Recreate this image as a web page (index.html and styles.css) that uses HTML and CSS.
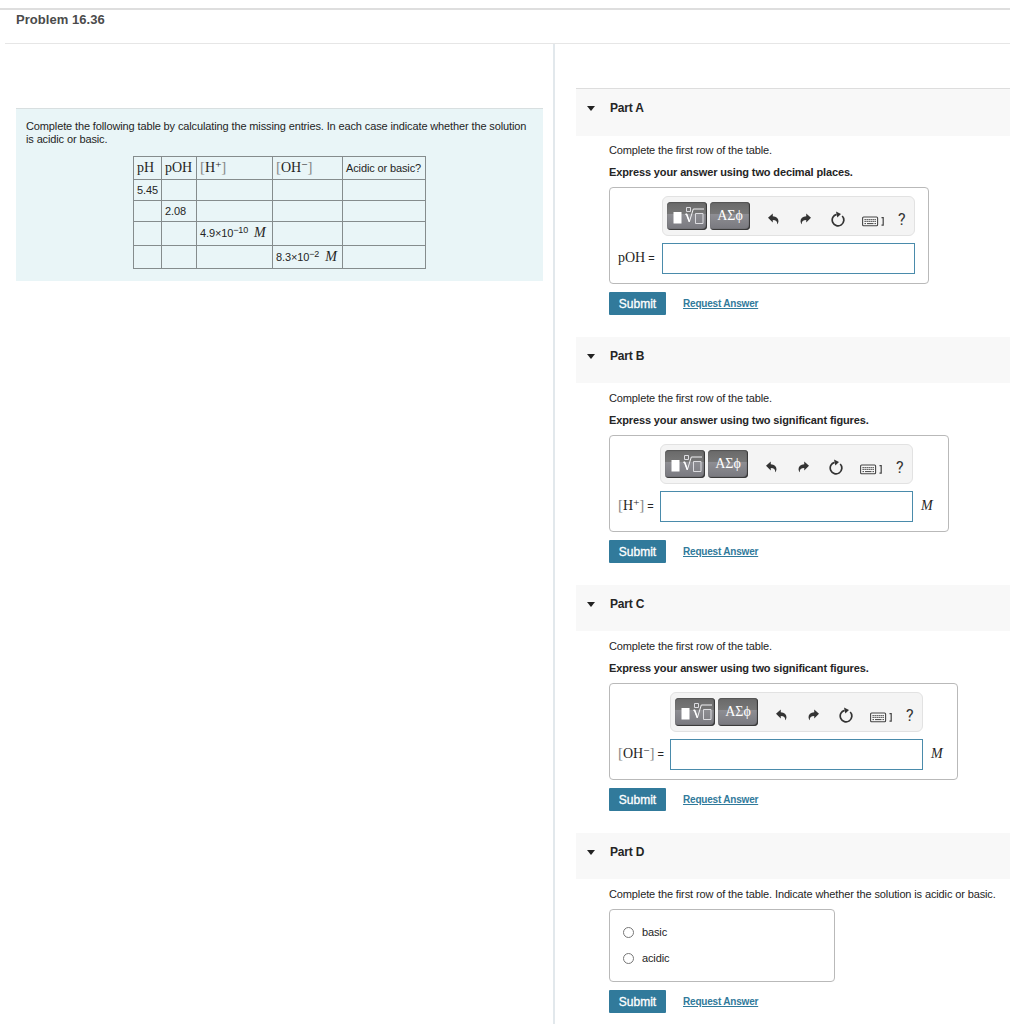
FILE: index.html
```html
<!DOCTYPE html>
<html lang="en">
<head>
  <meta charset="UTF-8" />
  <meta name="viewport" content="width=device-width, initial-scale=1.0" />
  <title>Problem 16.36</title>
  <link rel="stylesheet" href="styles.css">
</head>
<body>
  <!-- shared icons -->
  <svg class="icon-defs" width="0" height="0">
    <symbol id="i-template" viewBox="0 0 40 28">
      <rect x="6.500" y="10" width="8" height="11.500" fill="#fff"/>
      <path d="M19.500 5.500h4v4h-4zM28.500 11.500h7.500v10h-7.500z" fill="none" stroke="#dcdce0" stroke-width="1"/>
      <path d="M18 12.500l1.500-.8 2.800 8.300L26.300 7H37" fill="none" stroke="#f2f2f4" stroke-width="1"/>
      <path d="M19.500 12l2.800 7.500" stroke="#fff" stroke-width="1.500"/>
    </symbol>
    <symbol id="i-undo" viewBox="0 0 12 13">
      <path d="M0 5.200L5.200.6v2.800c4 .2 6.200 2.200 6.200 5.200 0 1.500-.5 2.700-1.300 3.700.1-3.300-1.400-4.700-4.900-4.700v2.600z"/>
    </symbol>
    <symbol id="i-redo" viewBox="0 0 12 13">
      <path d="M12 5.200L6.800.6v2.800C2.800 3.600.6 5.600.6 8.600c0 1.500.5 2.700 1.300 3.700-.1-3.300 1.400-4.700 4.900-4.700v2.600z"/>
    </symbol>
    <symbol id="i-reset" viewBox="0 0 14 16">
      <path d="M11.200 5A5.800 5.800 0 1 1 5.600 3.400" fill="none" stroke="#333" stroke-width="1.700"/>
      <path d="M5 .5l5 2.600L6.300 6.500z"/>
    </symbol>
    <symbol id="i-keys" viewBox="0 0 23 11">
      <rect x=".6" y="1" width="15" height="8.800" rx="1" fill="#f8f8f8" stroke="#444" stroke-width="1.100"/>
      <path d="M2.500 3.500h11.500M2.500 5.400h11.500" stroke="#444" stroke-width="1.100" stroke-dasharray="1.300 .7"/>
      <path d="M2.500 7.600h1.500M5 7.600h6.500M12.500 7.600H14" stroke="#444" stroke-width="1"/>
      <path d="M19.500 1.600h1.700v7.600h-1.700" fill="none" stroke="#444" stroke-width="1.200"/>
    </symbol>
  </svg>

  <header class="page-header">
    <h1>Problem 16.36</h1>
  </header>

  <div class="page">
    <section class="left">
      <div class="problem">
        <p>Complete the following table by calculating the missing entries. In each case indicate whether the solution<br>is acidic or basic.</p>
        <table>
          <colgroup><col class="c1"><col class="c2"><col class="c3"><col class="c4"><col class="c5"></colgroup>
          <tr class="head">
            <td><span class="math">pH</span></td>
            <td><span class="math">pOH</span></td>
            <td><span class="math"><i class="br">[</i>H<sup>+</sup><i class="br">]</i></span></td>
            <td><span class="math"><i class="br">[</i>OH<sup>−</sup><i class="br">]</i></span></td>
            <td>Acidic or basic?</td>
          </tr>
          <tr class="short"><td>5.45</td><td></td><td></td><td></td><td></td></tr>
          <tr class="short"><td></td><td>2.08</td><td></td><td></td><td></td></tr>
          <tr class="tall"><td></td><td></td><td>4.9×10<sup>−10</sup> <span class="unit">M</span></td><td></td><td></td></tr>
          <tr class="tall"><td></td><td></td><td></td><td>8.3×10<sup>−2</sup> <span class="unit">M</span></td><td></td></tr>
        </table>
      </div>
    </section>

    <main class="right">
      <section class="part first">
        <h2><span class="arrow"></span>Part A</h2>
        <div class="part-body">
          <p>Complete the first row of the table.</p>
          <p class="instructions">Express your answer using two decimal places.</p>
          <div class="answer answer-a">
            <label for="a"><span class="math">pOH</span> =</label>
            <div class="editor">
              <div class="toolbar">
                <button class="tool"><svg width="40" height="28"><use href="#i-template"/></svg></button>
                <button class="tool greek">ΑΣϕ</button>
                <svg class="undo" width="11" height="12"><use href="#i-undo"/></svg>
                <svg class="redo" width="11" height="12"><use href="#i-redo"/></svg>
                <svg class="reset" width="14" height="16"><use href="#i-reset"/></svg>
                <svg class="keys" width="23" height="11"><use href="#i-keys"/></svg>
                <span class="help">?</span>
              </div>
              <input type="text" id="a">
            </div>
          </div>
          <div class="actions"><button class="submit">Submit</button><a href="#">Request Answer</a></div>
        </div>
      </section>

      <section class="part">
        <h2><span class="arrow"></span>Part B</h2>
        <div class="part-body">
          <p>Complete the first row of the table.</p>
          <p class="instructions">Express your answer using two significant figures.</p>
          <div class="answer answer-b">
            <label for="b"><span class="math"><i class="br">[</i>H<sup>+</sup><i class="br">]</i></span> =</label>
            <div class="editor">
              <div class="toolbar">
                <button class="tool"><svg width="40" height="28"><use href="#i-template"/></svg></button>
                <button class="tool greek">ΑΣϕ</button>
                <svg class="undo" width="11" height="12"><use href="#i-undo"/></svg>
                <svg class="redo" width="11" height="12"><use href="#i-redo"/></svg>
                <svg class="reset" width="14" height="16"><use href="#i-reset"/></svg>
                <svg class="keys" width="23" height="11"><use href="#i-keys"/></svg>
                <span class="help">?</span>
              </div>
              <input type="text" id="b">
            </div>
            <span class="unit">M</span>
          </div>
          <div class="actions"><button class="submit">Submit</button><a href="#">Request Answer</a></div>
        </div>
      </section>

      <section class="part">
        <h2><span class="arrow"></span>Part C</h2>
        <div class="part-body">
          <p>Complete the first row of the table.</p>
          <p class="instructions">Express your answer using two significant figures.</p>
          <div class="answer answer-c">
            <label for="c"><span class="math"><i class="br">[</i>OH<sup>−</sup><i class="br">]</i></span> =</label>
            <div class="editor">
              <div class="toolbar">
                <button class="tool"><svg width="40" height="28"><use href="#i-template"/></svg></button>
                <button class="tool greek">ΑΣϕ</button>
                <svg class="undo" width="11" height="12"><use href="#i-undo"/></svg>
                <svg class="redo" width="11" height="12"><use href="#i-redo"/></svg>
                <svg class="reset" width="14" height="16"><use href="#i-reset"/></svg>
                <svg class="keys" width="23" height="11"><use href="#i-keys"/></svg>
                <span class="help">?</span>
              </div>
              <input type="text" id="c">
            </div>
            <span class="unit">M</span>
          </div>
          <div class="actions"><button class="submit">Submit</button><a href="#">Request Answer</a></div>
        </div>
      </section>

      <section class="part last">
        <h2><span class="arrow"></span>Part D</h2>
        <div class="part-body">
          <p>Complete the first row of the table. Indicate whether the solution is acidic or basic.</p>
          <div class="choices">
            <label><input type="radio" name="d">basic</label>
            <label><input type="radio" name="d">acidic</label>
          </div>
          <div class="actions"><button class="submit">Submit</button><a href="#">Request Answer</a></div>
        </div>
      </section>
    </main>
  </div>
</body>
</html>
```
FILE: styles.css
```css
* {
  box-sizing: border-box;
  margin: 0;
  padding: 0;
}

body {
  font-family: "Liberation Sans", Arial, sans-serif;
  font-size: 11px;
  line-height: 13px;
  letter-spacing: -0.125px;
  color: #252525;
  background: #fff;
  padding-top: 8px;
}

.icon-defs {
  display: none;
}

.page-header {
  height: 36px;
  border-top: 2px solid #dedede;
}

.page-header h1 {
  margin-left: 5px;
  height: 34px;
  padding: 2px 0 0 11px;
  border-bottom: 1px solid #e6e6e6;
  font-size: 13px;
  line-height: 15px;
  letter-spacing: 0.05px;
  color: #4b4b4b;
}

.page {
  display: flex;
  height: 980px;
}

.left {
  width: 555px;
  padding: 64px 10px 0 16px;
  border-right: 2px solid #e2e8ec;
}

.problem {
  width: 527px;
  height: 173px;
  padding: 11px 10px 0;
  background: #e9f5f7;
  border-top: 1px solid #d8dfe0;
}

.problem p {
  white-space: nowrap;
}

.problem table {
  width: 293px;
  margin: 10px 0 0 107px;
  border-collapse: collapse;
  table-layout: fixed;
}

.c1 { width: 28px; }
.c2 { width: 35px; }
.c3 { width: 76px; }
.c4 { width: 70px; }
.c5 { width: 83px; }

td {
  padding: 0 0 0 3px;
  border: 1px solid #858c8d;
  white-space: nowrap;
  vertical-align: middle;
}

.head td { height: 23px; }
.short td { height: 21px; }
.tall td { height: 23.500px; }

sup {
  font-size: 9px;
  line-height: 0;
  vertical-align: 4px;
}

.math,
.unit {
  font-family: "Liberation Serif", "Times New Roman", serif;
  font-size: 14px;
  letter-spacing: 0;
}

.math sup {
  font-size: 11px;
}

.unit {
  font-style: italic;
}

td .unit {
  margin-left: 3px;
}

.br {
  font-style: normal;
  font-size: 15px;
  line-height: 0;
  color: #888;
}

.right {
  flex: 1;
  padding: 44px 0 0 21px;
}

.part {
  height: 248px;
}

.part h2 {
  display: flex;
  align-items: center;
  height: 46px;
  padding: 0 0 7px 11px;
  background: #f8f8f8;
  font-size: 12px;
  letter-spacing: -0.2px;
}

.part-body {
  padding: 9px 0 0 33px;
}

.first {
  height: 249px;
}

.first h2 {
  height: 48px;
  padding-bottom: 8px;
  border-top: 1px solid #ddd;
}

.first .part-body {
  padding-top: 8px;
}

.last {
  height: auto;
}

.arrow {
  margin-right: 15px;
  border: 4.500px solid transparent;
  border-width: 5px 4.500px 0;
  border-top-color: #222;
}

.part-body p {
  white-space: nowrap;
}

.part-body .instructions {
  margin-top: 9px;
  font-weight: bold;
}

.answer {
  display: flex;
  align-items: flex-end;
  height: 97px;
  margin-top: 8px;
  padding: 0 0 9px 8px;
  border: 1px solid #b9b9b9;
  border-radius: 4px;
}

.answer label,
.answer > .unit {
  height: 23px;
}

.answer-a { width: 320px; }
.answer-a label { width: 44px; }
.answer-b { width: 340px; }
.answer-b label { width: 42px; }
.answer-c { width: 349px; }
.answer-c label { width: 52px; }

.answer > .unit {
  margin-left: 8px;
}

.editor {
  width: 253px;
}

.toolbar {
  display: flex;
  align-items: center;
  height: 40px;
  margin-bottom: 7px;
  padding-left: 4px;
  background: #f4f4f4;
  border: 1px solid #e2e2e2;
  border-radius: 6px;
}

.toolbar svg {
  display: block;
  flex: none;
  fill: #333;
}

.tool {
  width: 40px;
  height: 28px;
  margin-right: 3px;
  border: 0;
  border-radius: 4px;
  background: linear-gradient(#696969, #777 42%, #8e8e93 43%, #78787e);
  box-shadow: inset -1px -1px 1px #333, inset 0 1px 1px #555;
  color: #fff;
}

.greek {
  font-family: "Liberation Serif", serif;
  font-size: 14px;
}

.toolbar .undo { margin: 6px 0 0 15px; }
.toolbar .redo { margin: 6px 0 0 21px; }
.toolbar .reset { margin: 6px 0 0 20px; }
.toolbar .keys { margin: 10px 0 0 17px; }

.help {
  margin: 6px 0 0 13px;
  font-family: Roboto, sans-serif;
  font-size: 16px;
  color: #333;
}

.editor input {
  display: block;
  width: 253px;
  height: 31px;
  border: 1px solid #4a8bab;
}

.actions {
  display: flex;
  align-items: center;
  margin-top: 8px;
}

.submit {
  width: 57px;
  height: 23px;
  margin-right: 17px;
  border: 0;
  border-radius: 1px;
  background: #317a9b;
  color: #fff;
  font: 12px "Liberation Sans", Arial, sans-serif;
  -webkit-text-stroke: 0.3px #fff;
}

.actions a {
  color: #317a9b;
  font-size: 10px;
  font-weight: bold;
  letter-spacing: -0.2px;
}

.choices {
  width: 226px;
  height: 73px;
  margin-top: 8px;
  padding: 16px 0 0 13px;
  border: 1px solid #b9b9b9;
  border-radius: 4px;
}

.choices label {
  display: flex;
  align-items: center;
  height: 13px;
  margin-bottom: 13px;
}

.choices input {
  width: 11px;
  height: 11px;
  margin-right: 8px;
  appearance: none;
  border: 1px solid #777;
  border-radius: 50%;
}
```
